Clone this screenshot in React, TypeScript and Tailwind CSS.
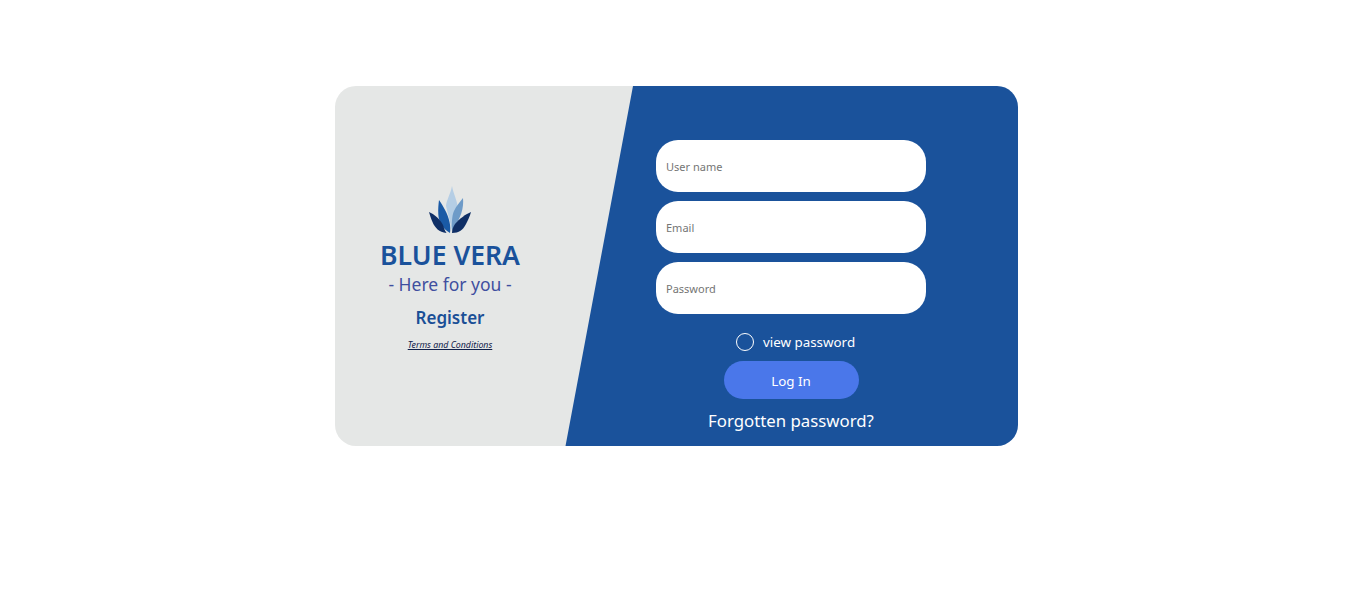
const font = { fontFamily: '"Noto Sans", sans-serif' }

const Logo = () => (
  <svg width="42" height="48" viewBox="0 0 42 48" className="block">
    <path d="M23 0 C24.5 8 28 14 28.5 20 L23 44 L17 20 C17.5 14 21.5 8 23 0 Z" fill="#b5cee5" />
    <path d="M34 12 C35 22 32 32 23 45 C22.5 38 23 29 25 25 C27 20 31 16 34 12 Z" fill="#6e9bc8" />
    <path d="M10 14 C14 20 19 28 20.5 36 C21.5 40 21.5 44 21 47 C14 43 9.5 36 9.3 28 C9 23 9.5 18 10 14 Z" fill="#1a5aa6" />
    <path d="M0 26 C5 28 11 33 14 39 C15 42 16 45 17.5 47 C10 46 6 42 3.5 36 C2 33 1 29 0 26 Z" fill="#0f2f66" />
    <path d="M42 26 C37 28 30 33 26 38 C24 41 23 44 23 47 C30 47 34 44 37 38 C39 34 41 30 42 26 Z" fill="#0f2f66" />
  </svg>
)

const Field = ({ placeholder, type = 'text' }: { placeholder: string; type?: string }) => (
  <input
    type={type}
    placeholder={placeholder}
    className="block h-[52px] w-[270px] rounded-[22px] bg-white px-[10px] pt-[1px] text-[11px] text-[#444] outline-none placeholder:text-[#757575]"
    style={font}
  />
)

export default function App() {
  return (
    <div className="min-h-[591px] bg-white pt-[86px] pl-[335px]" style={font}>
      <div className="relative flex h-[360px] w-[683px]">
        <div className="absolute inset-y-0 right-0 w-[458px] rounded-r-[21px] bg-[#1a529b]" />
        <div className="absolute inset-y-0 left-0 w-[298px] rounded-l-[21px] bg-[#e5e7e6] [clip-path:polygon(0_0,100%_0,230.5px_100%,0_100%)]" />

        <div className="relative flex w-[230px] flex-col items-center pt-[100px]">
          <Logo />
          <h1 className="mt-[2px] text-[26.6px] leading-[38px] font-semibold whitespace-nowrap text-[#1a529b]">BLUE VERA</h1>
          <p className="-mt-[2px] text-[17.5px] leading-[24px] whitespace-nowrap text-[#3f4f9f]">- Here for you -</p>
          <a className="mt-[10px] text-[17px] leading-[24px] font-semibold text-[#1a4f96]">Register</a>
          <a className="mt-[9px] text-[8.8px] leading-[12px] whitespace-nowrap text-[#10204a] italic underline">Terms and Conditions</a>
        </div>

        <div className="relative ml-[91px] flex w-[270px] flex-col items-center pt-[54px]">
          <div className="flex flex-col gap-[9px]">
            <Field placeholder="User name" />
            <Field placeholder="Email" type="email" />
            <Field placeholder="Password" type="password" />
          </div>
          <label className="mt-[18px] flex h-[20px] items-center gap-[9px] pl-[9px] text-[13.4px] text-white">
            <span className="h-[18px] w-[18px] rounded-full border border-white" />
            view password
          </label>
          <button className="mt-[9px] h-[38px] w-[135px] rounded-[19px] bg-[#4a77ea] pt-[2px] text-[13.4px] text-white">Log In</button>
          <a className="mt-[9px] text-[16.8px] leading-[26px] whitespace-nowrap text-white">Forgotten password?</a>
        </div>
      </div>
    </div>
  )
}
